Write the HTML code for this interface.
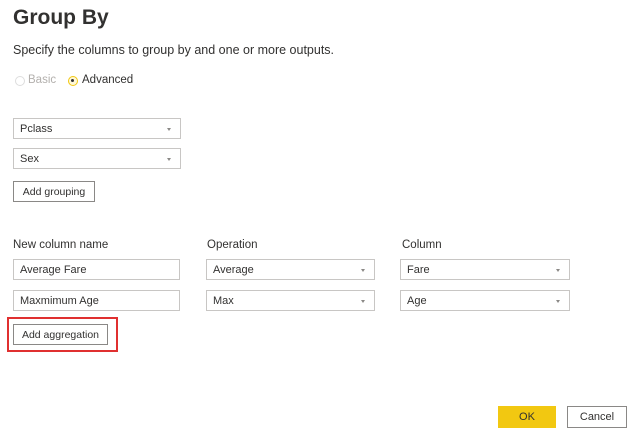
<!DOCTYPE html>
<html><head><style>
body{margin:0;width:631px;height:433px;background:#fff;font-family:"Liberation Sans",sans-serif;color:#252423;position:relative;overflow:hidden}
.a{position:absolute}
.box{position:absolute;border:1px solid #c8c6c4;box-sizing:border-box;font-size:11px;padding-left:6px;line-height:21px;background:#fff;color:#323130}
.dd::after{content:"";position:absolute;right:9px;top:9px;border-left:2.5px solid transparent;border-right:2.5px solid transparent;border-top:3px solid #8a8886}
.btn{position:absolute;border:1px solid #8a8886;box-sizing:border-box;font-size:10.5px;text-align:center;background:#fff;color:#323130}
.lbl{position:absolute;font-size:11.5px;color:#323130}
</style></head><body>
<div class="a" style="left:13px;top:6px;font-size:21px;font-weight:bold;color:#323130">Group By</div>
<div class="a" style="left:13px;top:43px;font-size:12.5px;color:#323130">Specify the columns to group by and one or more outputs.</div>
<div class="a" style="left:15px;top:76px;width:8px;height:8px;border:1px solid #ddd;border-radius:50%"></div>
<div class="a" style="left:28px;top:74px;font-size:11.5px;color:#b3b0ad">Basic</div>
<div class="a" style="left:68px;top:76px;width:8px;height:8px;border:1px solid #f2c811;border-radius:50%;background:#fff8d8"></div>
<div class="a" style="left:71px;top:79px;width:3px;height:3px;background:#333;border-radius:50%"></div>
<div class="a" style="left:82px;top:74px;font-size:11.5px;color:#323130">Advanced</div>
<div class="box dd" style="left:13px;top:118px;width:168px;height:21px">Pclass</div>
<div class="box dd" style="left:13px;top:148px;width:168px;height:21px">Sex</div>
<div class="btn" style="left:13px;top:181px;width:82px;height:21px;line-height:20px">Add grouping</div>
<div class="lbl" style="left:13px;top:239px">New column name</div>
<div class="lbl" style="left:207px;top:239px">Operation</div>
<div class="lbl" style="left:402px;top:239px">Column</div>
<div class="box" style="left:13px;top:259px;width:167px;height:21px">Average Fare</div>
<div class="box dd" style="left:206px;top:259px;width:169px;height:21px">Average</div>
<div class="box dd" style="left:400px;top:259px;width:170px;height:21px">Fare</div>
<div class="box" style="left:13px;top:290px;width:167px;height:21px">Maxmimum Age</div>
<div class="box dd" style="left:206px;top:290px;width:169px;height:21px">Max</div>
<div class="box dd" style="left:400px;top:290px;width:170px;height:21px">Age</div>
<div class="a" style="left:7px;top:317px;width:107px;height:31px;border:2px solid #e03030"></div>
<div class="btn" style="left:13px;top:324px;width:95px;height:21px;line-height:20px">Add aggregation</div>
<div class="a" style="left:498px;top:406px;width:58px;height:22px;background:#f2c811;font-size:11px;text-align:center;line-height:22px;color:#323130">OK</div>
<div class="btn" style="left:567px;top:406px;width:60px;height:22px;line-height:20px;font-size:11px">Cancel</div>
</body></html>
